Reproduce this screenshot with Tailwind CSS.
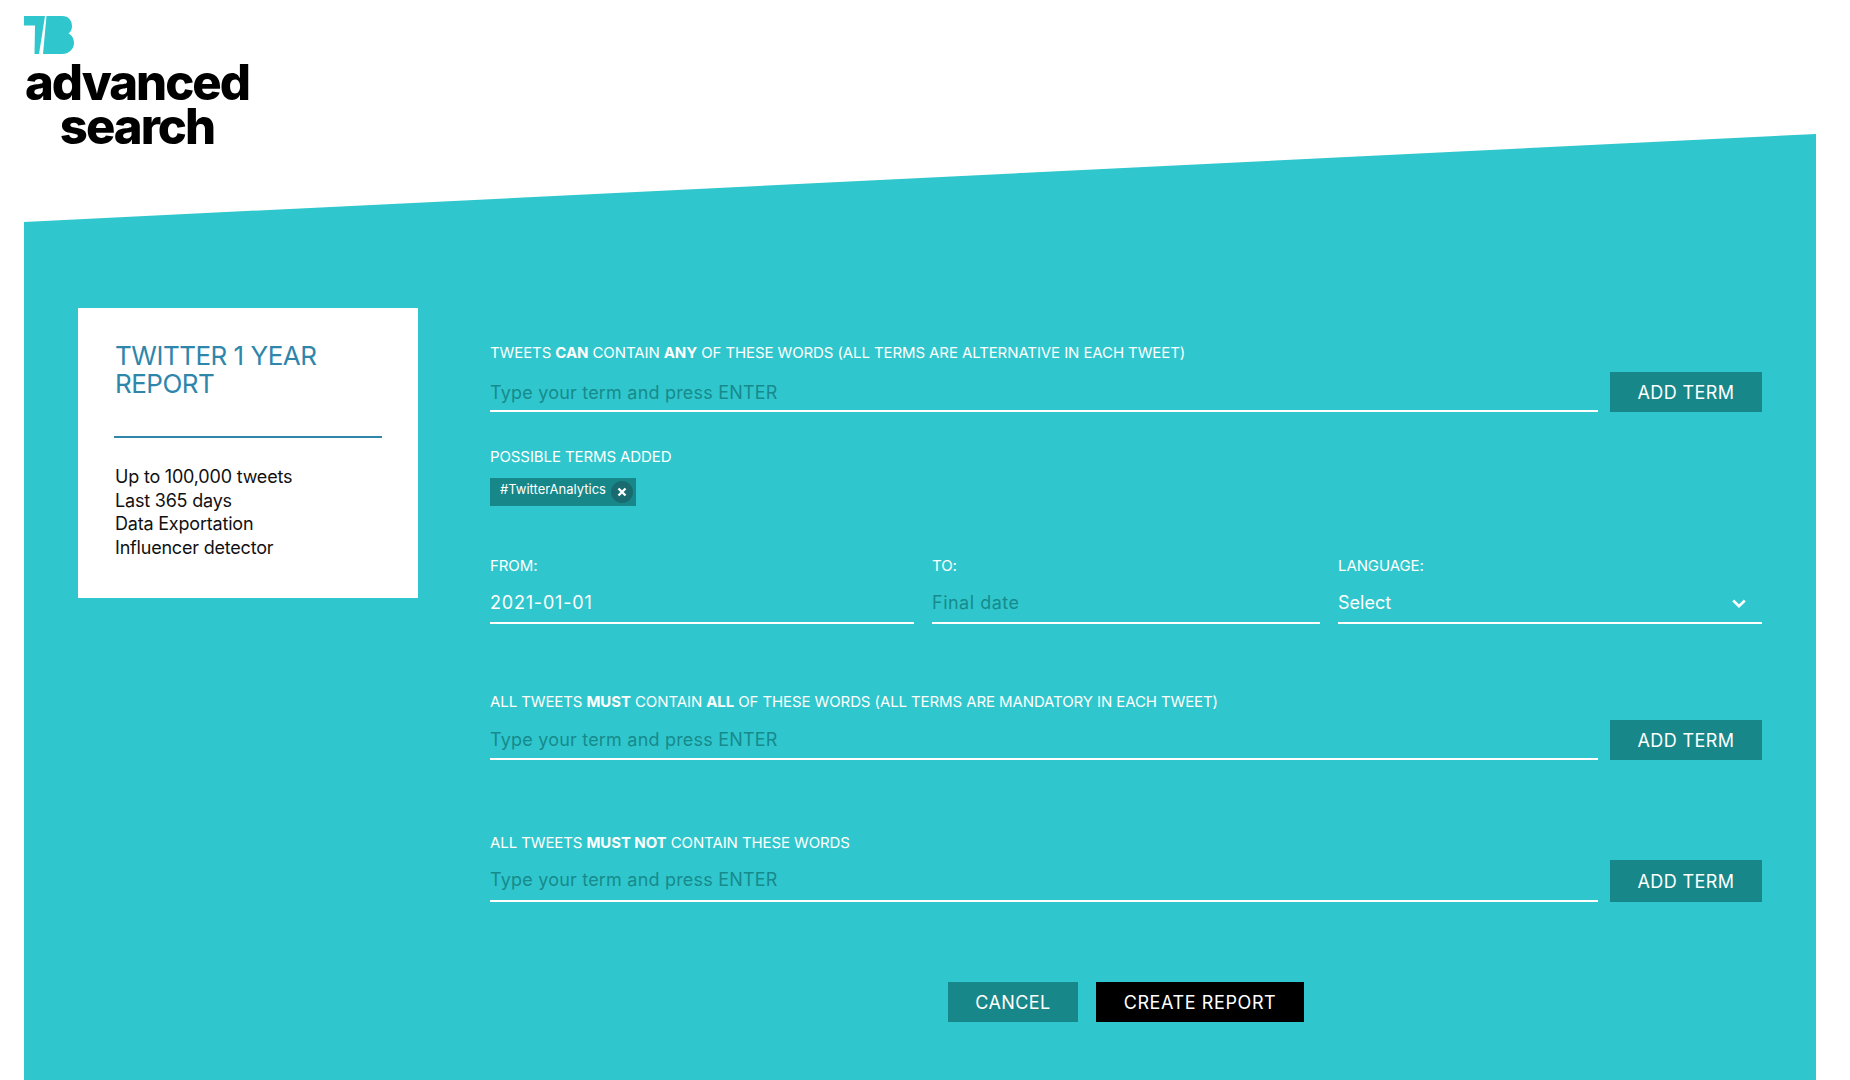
<!DOCTYPE html>
<html lang="en">
<head>
<meta charset="UTF-8">
<title>Advanced search</title>
<script src="https://cdn.jsdelivr.net/npm/@tailwindcss/browser@4"></script>
</head>
<body class="bg-white font-['Inter',sans-serif] text-white">
<div class="w-[1850px] h-[1080px] overflow-hidden">

  <!-- logo -->
  <header class="h-[134px] pl-[24px] pt-[16px]">
    <svg class="block" width="50" height="38" viewBox="0 0 50 38">
      <path fill="#2fc7cd" d="M0 0H21L15 38H10.5L11 9.5H0Z"/>
      <path fill="#2fc7cd" d="M22.5 0H38C45 0 48 5 48 10C48 13 47 16 44.5 17.5C48 19 50 23 50 27C50 33 45 38 38 38H19Z"/>
    </svg>
    <div class="w-[226px] text-center text-black font-extrabold text-[49px] leading-[44px] tracking-[-2px] mt-[7px]">advanced<br>search</div>
  </header>

  <!-- teal panel, top edge is slanted -->
  <main class="ml-[24px] w-[1792px] h-[946px] bg-[#2fc7cd] [clip-path:polygon(0_88px,100%_0,100%_100%,0_100%)] flex gap-[72px] pl-[54px] pr-[54px] pt-[174px]">

    <aside class="w-[340px] h-[290px] shrink-0 bg-white px-[37px] pt-[34px]">
      <h2 class="text-[26px] leading-[28px] tracking-[-0.5px] text-[#2e86ab] w-[240px]">TWITTER 1 YEAR REPORT</h2>
      <div class="h-[2px] bg-[#2e86ab] mt-[38px] -ml-px w-[268px]"></div>
      <ul class="mt-[27px] text-[18px] leading-[23.5px] text-[#111] tracking-[-0.2px]">
        <li>Up to 100,000 tweets</li>
        <li>Last 365 days</li>
        <li>Data Exportation</li>
        <li>Influencer detector</li>
      </ul>
    </aside>

    <form class="w-[1272px] pt-[35px]">
      <label class="block text-[15px] leading-[20px] tracking-[-0.1px]">TWEETS <b>CAN</b> CONTAIN <b>ANY</b> OF THESE WORDS (ALL TERMS ARE ALTERNATIVE IN EACH TWEET)</label>
      <div class="flex gap-[12px] mt-[9px]">
        <div class="flex-1 h-[40px] border-b-2 border-white text-[18px] leading-[41px] tracking-[0.2px] text-[#178a8c]">Type your term and press ENTER</div>
        <button class="w-[152px] h-[40px] bg-[#178789] text-[18px] tracking-[0.4px]">ADD TERM</button>
      </div>

      <label class="block text-[15px] leading-[20px] tracking-[-0.1px] mt-[35px]">POSSIBLE TERMS ADDED</label>
      <div class="flex items-center w-[146px] h-[28px] mt-[11px] bg-[#178789] pl-[10px] text-[13px]">
        <span class="-mt-[4px]">#TwitterAnalytics</span>
        <span class="ml-auto mr-[3px] flex items-center justify-center w-[22px] h-[22px] rounded-full bg-[#1a6b70]">
          <svg width="10" height="10" viewBox="0 0 10 10"><path d="M1.5 1.5L8.5 8.5M8.5 1.5L1.5 8.5" stroke="#fff" stroke-width="2.4"/></svg>
        </span>
      </div>

      <div class="flex gap-[18px] mt-[50px]">
        <div class="w-[424px]">
          <label class="block text-[15px] leading-[20px] tracking-[-0.1px]">FROM:</label>
          <div class="h-[40px] mt-[8px] border-b-2 border-white text-[18px] leading-[38px] tracking-[0.8px]">2021-01-01</div>
        </div>
        <div class="w-[388px]">
          <label class="block text-[15px] leading-[20px] tracking-[-0.1px]">TO:</label>
          <div class="h-[40px] mt-[8px] border-b-2 border-white text-[18px] leading-[38px] tracking-[0.5px] text-[#178a8c]">Final date</div>
        </div>
        <div class="w-[424px]">
          <label class="block text-[15px] leading-[20px] tracking-[-0.1px]">LANGUAGE:</label>
          <div class="flex items-center justify-between h-[40px] mt-[8px] border-b-2 border-white text-[18px] leading-[38px] pr-[16px]">
            <span>Select</span>
            <svg width="14" height="9" viewBox="0 0 14 9"><path d="M1.2 1.5L7 7.2L12.8 1.5" fill="none" stroke="#fff" stroke-width="2.6"/></svg>
          </div>
        </div>
      </div>

      <label class="block text-[15px] leading-[20px] tracking-[-0.1px] mt-[68px]">ALL TWEETS <b>MUST</b> CONTAIN <b>ALL</b> OF THESE WORDS (ALL TERMS ARE MANDATORY IN EACH TWEET)</label>
      <div class="flex gap-[12px] mt-[8px]">
        <div class="flex-1 h-[40px] border-b-2 border-white text-[18px] leading-[40px] tracking-[0.2px] text-[#178a8c]">Type your term and press ENTER</div>
        <button class="w-[152px] h-[40px] bg-[#178789] text-[18px] tracking-[0.4px]">ADD TERM</button>
      </div>

      <label class="block text-[15px] leading-[20px] tracking-[-0.1px] mt-[73px]">ALL TWEETS <b>MUST NOT</b> CONTAIN THESE WORDS</label>
      <div class="flex gap-[12px] mt-[7px]">
        <div class="flex-1 h-[42px] border-b-2 border-white text-[18px] leading-[40px] tracking-[0.2px] text-[#178a8c]">Type your term and press ENTER</div>
        <button class="w-[152px] h-[42px] bg-[#178789] text-[18px] tracking-[0.4px]">ADD TERM</button>
      </div>

      <div class="flex justify-center gap-[18px] mt-[80px]">
        <button class="w-[130px] h-[40px] bg-[#178789] text-[18px] tracking-[0.4px]">CANCEL</button>
        <button class="w-[208px] h-[40px] bg-black text-[18px] tracking-[0.6px]">CREATE REPORT</button>
      </div>
    </form>
  </main>
</div>
</body>
</html>
